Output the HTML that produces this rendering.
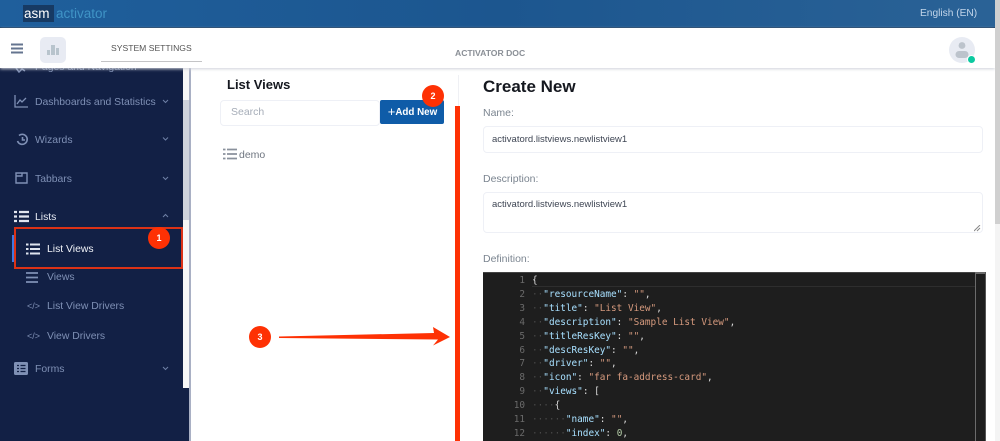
<!DOCTYPE html>
<html><head><meta charset="utf-8"><style>
html,body{margin:0;padding:0;width:1000px;height:441px;overflow:hidden;background:#fff;font-family:"Liberation Sans",sans-serif}
.a{position:absolute;white-space:nowrap}
.m{color:#7f90b5;font-size:10.4px;line-height:14px}
.code{font-family:"DejaVu Sans Mono","Liberation Mono",monospace;font-size:9.4px;line-height:13.9px;color:#dcdcdc;white-space:pre}
.k{color:#a8e0ff}.s{color:#d69a7e}.n{color:#b5cea8}.d{color:#4a4a4a}.ln{color:#6a6a6a;text-align:right;width:30px;left:495px;font-family:"DejaVu Sans Mono","Liberation Mono",monospace;font-size:9.4px;line-height:13.9px;white-space:pre}
</style></head><body>
<div class="a" style="left:0;top:0;width:995px;height:28px;background:linear-gradient(90deg,#1f5f9c,#1c568f 50%,#2a6296)"></div>
<div class="a" style="left:0;top:27px;width:995px;height:1px;background:#123a63"></div>
<div class="a" style="left:23px;top:5px;width:31px;height:17px;background:#173a63"></div>
<div class="a" style="left:24px;top:5px;font-size:13.5px;line-height:17px;color:#fff">asm</div>
<div class="a" style="left:56px;top:5px;font-size:13.5px;line-height:17px;color:#3f94c6">activator</div>
<div class="a" style="left:920px;top:7px;font-size:10.2px;line-height:14px;color:#c3d6ea">English (EN)</div>

<div class="a" style="left:0;top:68px;width:190px;height:373px;background:#122045"></div>
<div class="a" style="left:183px;top:68px;width:7px;height:320px;background:#f6f6f6"></div>
<div class="a" style="left:183px;top:100px;width:6px;height:120px;background:#cfd3dc"></div>
<div class="a" style="left:189px;top:68px;width:2px;height:373px;background:#a9b0c4"></div>

<!-- sidebar -->
<div class="a m" style="left:35px;top:61px">Pages and Navigation</div>
<svg class="a" style="left:15px;top:62px" width="16" height="11"><path d="M1 6L4 10L7 7L10 9" stroke="#7f90b5" stroke-width="1.500" fill="none"/></svg>

<div class="a" style="left:0;top:28px;width:995px;height:40px;background:#fff;box-shadow:0 1px 3px #cfd2da"></div>
<svg class="a" style="left:11px;top:43px" width="13" height="11"><path d="M0 1.500H12M0 5.500H12M0 9.500H12" stroke="#64748f" stroke-width="2"/></svg>
<div class="a" style="left:40px;top:37px;width:26px;height:26px;border-radius:5px;background:#e8ebf3"></div>
<svg class="a" style="left:46px;top:43px" width="14" height="12"><path d="M1 12V7H4V12ZM5 12V2H9V12ZM10 12V5H13V12Z" fill="#b8c4cd"/></svg>
<div class="a" style="left:111px;top:42px;font-size:8.6px;line-height:12px;color:#555">SYSTEM SETTINGS</div>
<div class="a" style="left:101px;top:61px;width:101px;height:1px;background:#c4c4c6"></div>
<div class="a" style="left:455px;top:47px;font-size:8.6px;font-weight:bold;line-height:12px;color:#8a8f96">ACTIVATOR DOC</div>
<div class="a" style="left:949px;top:37px;width:26px;height:26px;border-radius:50%;background:#e8ebf3"></div>
<svg class="a" style="left:955px;top:41px" width="14" height="18"><circle cx="7" cy="4.500" r="3.400" fill="#bcc3cc"/><rect x="0.500" y="10" width="13" height="7" rx="3.500" fill="#bcc3cc"/></svg>
<div class="a" style="left:967px;top:55px;width:7px;height:7px;border-radius:50%;background:#0bc9a0;border:1px solid #fff"></div>

<div class="a" style="left:995px;top:0;width:5px;height:441px;background:#f4f4f4"></div>
<div class="a" style="left:995px;top:0;width:5px;height:224px;background:#d0d0d0"></div>

<svg class="a" style="left:14px;top:95px" width="14" height="13" fill="none" stroke="#7f90b5" stroke-width="1.300"><path d="M1 0V12H14M3 9L6 5L8 7L12 3"/></svg>
<div class="a m" style="left:35px;top:96px">Dashboards and Statistics</div>
<svg class="a" style="left:16px;top:133px" width="13" height="13" fill="none" stroke="#7f90b5" stroke-width="1.600"><path d="M3 2.500A5 5 0 1 1 1.500 8M6.500 4V7H9"/></svg>
<div class="a m" style="left:35px;top:134px">Wizards</div>
<svg class="a" style="left:15px;top:172px" width="13" height="12" fill="none" stroke="#7f90b5" stroke-width="1.400"><path d="M1 1H12V11H1ZM1 4H7V1"/></svg>
<div class="a m" style="left:35px;top:173px">Tabbars</div>
<svg class="a" style="left:14px;top:210px" width="15" height="13"><path d="M5 2H15M5 6.500H15M5 11H15M0 2H3M0 6.500H3M0 11H3" stroke="#e2e6f0" stroke-width="2.200"/></svg>
<div class="a m" style="left:35px;top:211px;color:#e6eaf3">Lists</div>
<div class="a" style="left:12px;top:235px;width:3px;height:27px;background:#3f78e0"></div>
<svg class="a" style="left:26px;top:243px" width="14" height="12"><path d="M4 1.500H14M4 6H14M4 10.500H14M0 1.500H2.500M0 6H2.500M0 10.500H2.500" stroke="#dfe4ee" stroke-width="2"/></svg>
<div class="a m" style="left:47px;top:243px;color:#f1f3f8">List Views</div>
<svg class="a" style="left:26px;top:272px" width="12" height="11"><path d="M0 1H12M0 5.500H12M0 10H12" stroke="#7f90b5" stroke-width="1.800"/></svg>
<div class="a m" style="left:47px;top:271px">Views</div>
<div class="a m" style="left:27px;top:299px;font-size:9px">&lt;/&gt;</div>
<div class="a m" style="left:47px;top:300px">List View Drivers</div>
<div class="a m" style="left:27px;top:329px;font-size:9px">&lt;/&gt;</div>
<div class="a m" style="left:47px;top:330px">View Drivers</div>
<svg class="a" style="left:14px;top:362px" width="14" height="13"><rect width="14" height="13" rx="1.500" fill="#7f90b5"/><path d="M3 3.500H5M3 6.500H5M3 9.500H5M6.500 3.500H11.500M6.500 6.500H11.500M6.500 9.500H11.500" stroke="#122045" stroke-width="1.300"/></svg>
<div class="a m" style="left:35px;top:363px">Forms</div>
<svg class="a" style="left:162px;top:99px" width="10" height="280" fill="none" stroke="#6f80a6" stroke-width="1"><path d="M1 1L3.500 3.500L6 1M1 38.500L3.500 41L6 38.500M1 78L3.500 80.500L6 78M1 118L3.500 115.500L6 118M1 268L3.500 270.500L6 268"/></svg>

<div class="a" style="left:14px;top:227px;width:165px;height:38px;border:2px solid #dc3216"></div>
<div class="a" style="left:148px;top:227px;width:22px;height:22px;border-radius:50%;background:#fe3104;color:#fff;font-size:9px;font-weight:bold;line-height:22px;text-align:center">1</div>

<!-- list column -->
<div class="a" style="left:227px;top:77px;font-size:13px;font-weight:bold;line-height:16px;color:#15181f">List Views</div>
<div class="a" style="left:220px;top:100px;width:158px;height:24px;border:1px solid #eef0f6;border-radius:4px"></div>
<div class="a" style="left:231px;top:106px;font-size:10.500px;line-height:13px;color:#a6adb8">Search</div>
<div class="a" style="left:380px;top:100px;width:64px;height:24px;background:#0f5ca8;border-radius:2px;color:#fff;font-size:9.800px;font-weight:bold;line-height:24px;text-align:center;padding-left:1px;box-sizing:border-box"><span style="font-size:13px;font-weight:normal;vertical-align:-1px">+</span>Add New</div>
<div class="a" style="left:422px;top:85px;width:22px;height:22px;border-radius:50%;background:#fe3104;color:#fff;font-size:9px;font-weight:bold;line-height:22px;text-align:center">2</div>
<svg class="a" style="left:223px;top:148px" width="14" height="12"><path d="M4 1.500H14M4 6H14M4 10.500H14M0 1.500H2.500M0 6H2.500M0 10.500H2.500" stroke="#8a919c" stroke-width="1.700"/></svg>
<div class="a" style="left:239px;top:149px;font-size:10.500px;line-height:13px;color:#6f7680">demo</div>
<div class="a" style="left:458px;top:75px;width:1px;height:366px;background:#eff0f4"></div>
<div class="a" style="left:455px;top:106px;width:5px;height:335px;background:#fe3104"></div>

<div class="a" style="left:249px;top:326px;width:22px;height:22px;border-radius:50%;background:#fe3104;color:#fff;font-size:9px;font-weight:bold;line-height:22px;text-align:center">3</div>
<svg class="a" style="left:278px;top:325px" width="175" height="26"><path d="M1 11.500L156 8L155 2L172 12L155 20.500L160 14.500L1 13Z" fill="#fe3104"/></svg>

<!-- form -->
<div class="a" style="left:483px;top:77px;font-size:17px;font-weight:bold;line-height:20px;color:#15181f">Create New</div>
<div class="a" style="left:483px;top:107px;font-size:10.500px;line-height:13px;color:#7b8590">Name:</div>
<div class="a" style="left:483px;top:126px;width:498px;height:25px;border:1px solid #eef0f6;border-radius:4px"></div>
<div class="a" style="left:492px;top:134px;font-size:9.500px;line-height:12px;color:#3f4654">activatord.listviews.newlistview1</div>
<div class="a" style="left:483px;top:173px;font-size:10.500px;line-height:13px;color:#7b8590">Description:</div>
<div class="a" style="left:483px;top:192px;width:498px;height:39px;border:1px solid #eef0f6;border-radius:4px"></div>
<div class="a" style="left:492px;top:199px;font-size:9.500px;line-height:12px;color:#3f4654">activatord.listviews.newlistview1</div>
<svg class="a" style="left:974px;top:225px" width="7" height="7"><path d="M0 6L6 0M3 6L6 3" stroke="#888" stroke-width="1"/></svg>
<div class="a" style="left:483px;top:253px;font-size:10.500px;line-height:13px;color:#7b8590">Definition:</div>

<div class="a" style="left:483px;top:272px;width:503px;height:169px;background:#1e1e1e;border-top:1px solid #444;box-sizing:border-box"></div>
<div class="a" style="left:532px;top:273px;width:444px;height:13px;border-bottom:1px solid #2e2e2e"></div>
<div class="a" style="left:975px;top:273px;width:1px;height:168px;background:#6b6b6b"></div>
<div class="a" style="left:975px;top:272px;width:11px;height:2px;background:#6b6b6b"></div>
<div class="a" style="left:985px;top:272px;width:1px;height:169px;background:#555"></div>
<div class="a ln" style="top:274px">1
2
3
4
5
6
7
8
9
10
11
12</div>
<div class="a code" style="left:532px;top:274px">{
<span class="d">··</span><span class="k">"resourceName"</span>: <span class="s">""</span>,
<span class="d">··</span><span class="k">"title"</span>: <span class="s">"List View"</span>,
<span class="d">··</span><span class="k">"description"</span>: <span class="s">"Sample List View"</span>,
<span class="d">··</span><span class="k">"titleResKey"</span>: <span class="s">""</span>,
<span class="d">··</span><span class="k">"descResKey"</span>: <span class="s">""</span>,
<span class="d">··</span><span class="k">"driver"</span>: <span class="s">""</span>,
<span class="d">··</span><span class="k">"icon"</span>: <span class="s">"far fa-address-card"</span>,
<span class="d">··</span><span class="k">"views"</span>: [
<span class="d">····</span>{
<span class="d">······</span><span class="k">"name"</span>: <span class="s">""</span>,
<span class="d">······</span><span class="k">"index"</span>: <span class="n">0</span>,</div>
</body></html>
